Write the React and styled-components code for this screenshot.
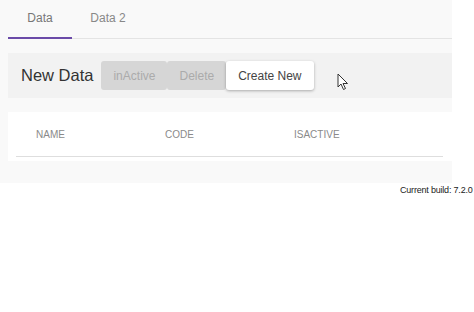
import React from 'react';
import styled, { createGlobalStyle } from 'styled-components';

const GlobalStyle = createGlobalStyle`
	body {
		margin: 0;
		background: #fff;
		font-family: "Liberation Sans", Arial, sans-serif;
	}
`;

const Page = styled.div`
	width: 452px;
	padding: 0 0 22px 8px;
	box-sizing: border-box;
	background: #f9f9f9;
`;

const Tabs = styled.div`
	display: flex;
	height: 39px;
	border-bottom: 1px solid #e4e4e4;
	box-sizing: border-box;
`;

const Tab = styled.div`
	width: 64px;
	display: flex;
	align-items: center;
	justify-content: center;
	font-size: 12px;
	color: ${props => props.active ? '#777' : '#888'};
	border-bottom: 2px solid ${props => props.active ? '#6a4aa8' : 'transparent'};
	margin-bottom: -1px;
	padding-bottom: 2px;
	box-sizing: border-box;
	& + & {
		margin-left: 4px;
	}
`;

const Toolbar = styled.div`
	display: flex;
	align-items: center;
	height: 45px;
	margin-top: 14px;
	padding-left: 13px;
	background: #f2f2f2;
	position: relative;
`;

const Title = styled.span`
	font-size: 16.5px;
	color: #333;
	margin-right: 8px;
`;

const Button = styled.button`
	height: 29px;
	padding: 0 ${props => props.pad}px;
	border: none;
	border-radius: 3px;
	font-family: inherit;
	font-size: 12px;
	background: ${props => props.disabled ? '#d6d6d6' : '#fff'};
	color: ${props => props.disabled ? '#ababab' : '#444'};
	box-shadow: ${props => props.disabled ? 'none' : '0 1px 3px rgba(0,0,0,0.3)'};
`;

const Cursor = styled.svg`
	position: absolute;
	left: 329px;
	top: 20px;
`;

const Card = styled.div`
	margin-top: 14px;
	height: 49px;
	background: #fff;
	padding: 0 9px 0 8px;
`;

const HeaderRow = styled.div`
	display: grid;
	grid-template-columns: 129px 129px 1fr;
	height: 45px;
	align-items: center;
	border-bottom: 1px solid #dedede;
	padding-top: 1px;
	box-sizing: border-box;
`;

const HeaderCell = styled.div`
	padding-left: 20px;
	font-size: 10px;
	color: #8a8a8a;
	text-transform: uppercase;
`;

const Build = styled.div`
	padding: 2px 0 0 400px;
	font-size: 9px;
	letter-spacing: -0.2px;
	color: #222;
	white-space: nowrap;
`;

export default function App() {
	return (
		<>
			<GlobalStyle />
			<Page>
				<Tabs>
					<Tab active>Data</Tab>
					<Tab>Data 2</Tab>
				</Tabs>
				<Toolbar>
					<Title>New Data</Title>
					<Button disabled pad={12}>inActive</Button>
					<Button disabled pad={12}>Delete</Button>
					<Button pad={12}>Create New</Button>
					<Cursor width="13" height="18" viewBox="0 0 13 18">
						<path d="M1 1 L1 14 L4 11 L6.5 16.5 L8.5 15.5 L6 10.5 L10.5 10.5 Z" fill="#fff" stroke="#333" strokeWidth="1" strokeLinejoin="round" />
					</Cursor>
				</Toolbar>
				<Card>
					<HeaderRow>
						<HeaderCell>Name</HeaderCell>
						<HeaderCell>Code</HeaderCell>
						<HeaderCell>IsActive</HeaderCell>
					</HeaderRow>
				</Card>
			</Page>
			<Build>Current build: 7.2.0</Build>
		</>
	);
}
